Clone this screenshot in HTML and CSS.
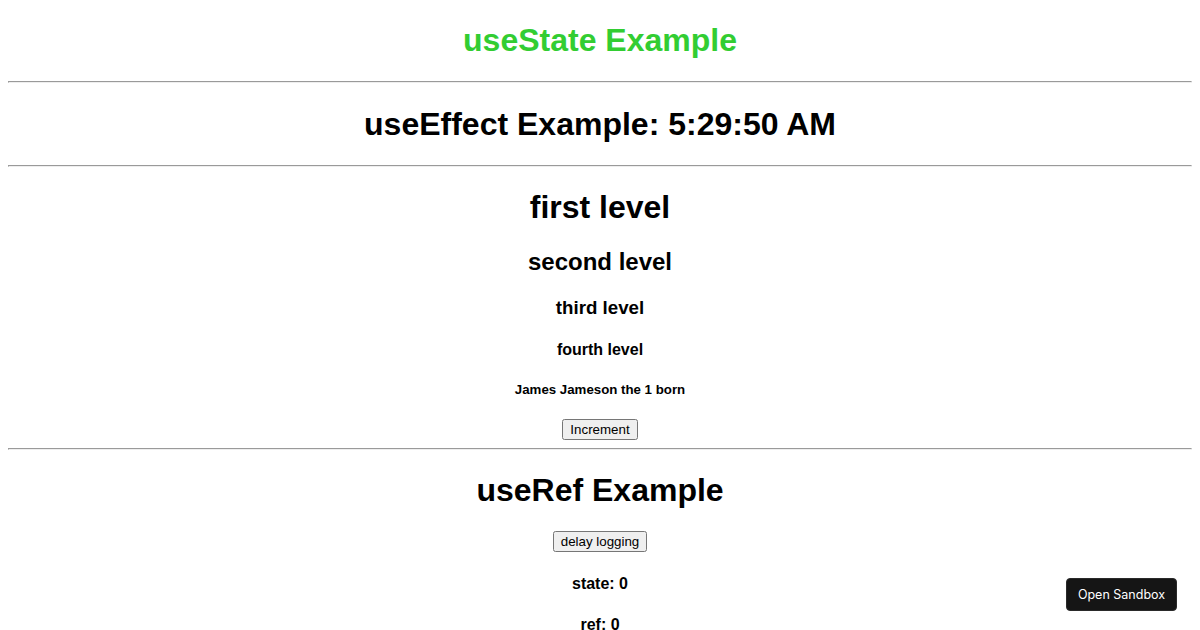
FILE: index.html
```html
<!DOCTYPE html>
<html lang="en">
<head>
  <meta charset="UTF-8" />
  <title>React Hooks</title>
  <link rel="stylesheet" href="styles.css">
</head>
<body>
  <div class="App">
    <h1 class="state-title">useState Example</h1>
    <hr />
    <h1>useEffect Example: 5:29:50 AM</h1>
    <hr />
    <div class="context">
      <h1>first level</h1>
      <h2>second level</h2>
      <h3>third level</h3>
      <h4>fourth level</h4>
      <h5>James Jameson the 1 born</h5>
      <button>Increment</button>
    </div>
    <hr />
    <div class="ref">
      <h1>useRef Example</h1>
      <button>delay logging</button>
      <h4>state: 0</h4>
      <h4>ref: 0</h4>
    </div>
  </div>

  <a class="open-sandbox">Open Sandbox</a>
</body>
</html>
```

FILE: styles.css
```css
/* ===== Base Styles ===== */
body {
  margin: 0;
  padding: 0 8px;
  font-family: 'Liberation Sans', Arial, sans-serif;
  background: #fff;
  color: #000;
}
.App {
  text-align: center;
}
h1, h2, h3, h4 {
  line-height: 1.2;
}
.state-title {
  color: limegreen;
}
hr {
  margin: 8px 0;
}
button {
  font-family: 'Liberation Sans', Arial, sans-serif;
}
.ref h4 {
  margin: 22px 0;
}

/* ===== Sandbox Button ===== */
.open-sandbox {
  position: fixed;
  right: 23px;
  bottom: 19px;
  width: 111px;
  height: 33px;
  display: flex;
  align-items: center;
  justify-content: center;
  box-sizing: border-box;
  background: #151515;
  color: #fff;
  border: 1px solid #2a2a2a;
  border-radius: 4px;
  font-family: Inter, 'Liberation Sans', sans-serif;
  font-size: 12.5px;
}
```
